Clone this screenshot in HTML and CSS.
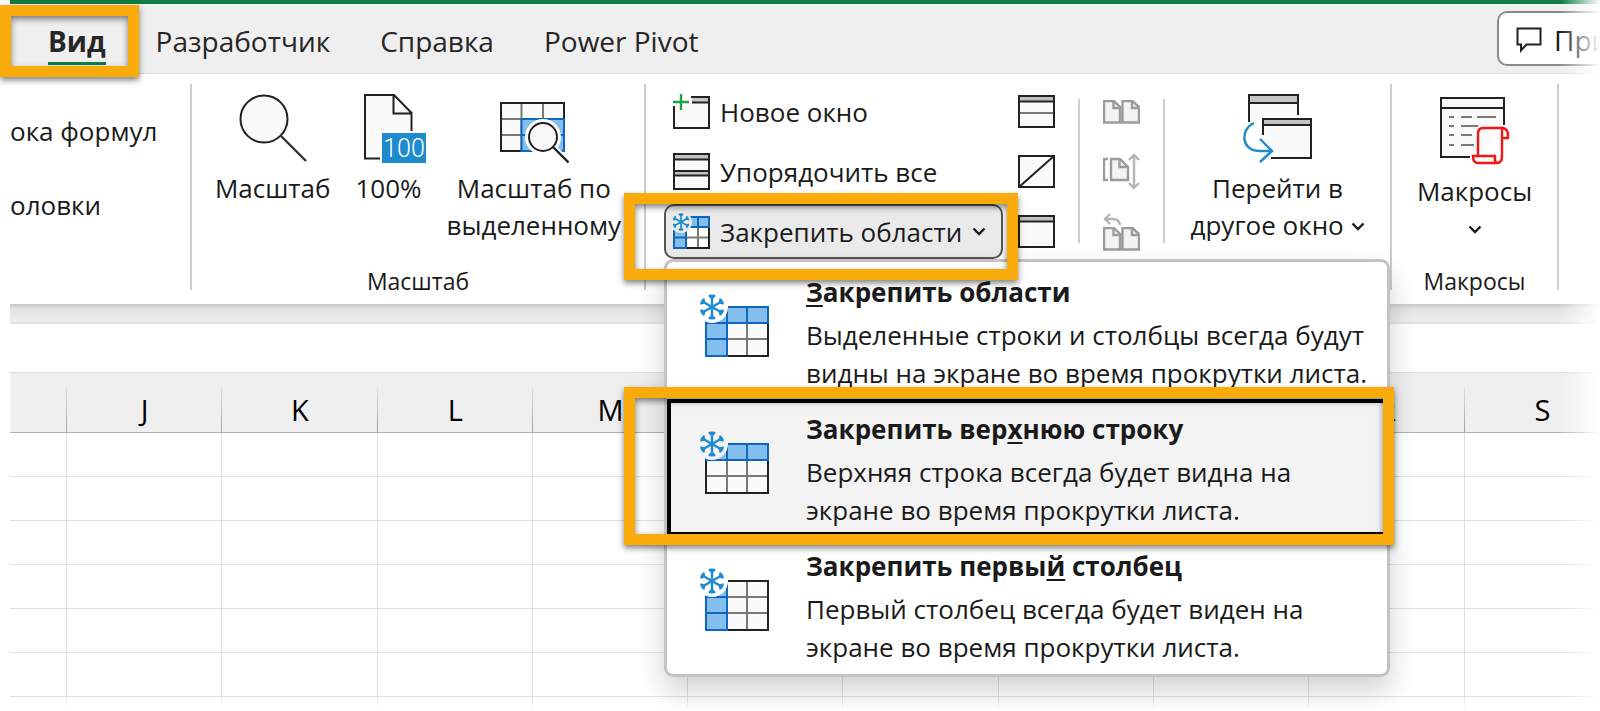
FILE: index.html
```html
<!DOCTYPE html>
<html lang="ru">
<head>
    <meta charset="UTF-8">
    <meta name="viewport" content="width=device-width, initial-scale=1.0">
    <title>Закрепить области</title>
    <link rel="stylesheet" href="styles.css">
</head>
<body>
    <!-- shared icon parts -->
    <svg class="defs" aria-hidden="true">
        <symbol id="flake" viewBox="-13 -13 26 26">
            <g fill="none" stroke="#1e8bcd" stroke-width="2.4">
                <g id="arm"><path d="M0 -12.5V12.5M-3 -11.8L0 -9L3 -11.8M-3 11.8L0 9L3 11.8"/></g>
                <use href="#arm" transform="rotate(60)"/>
                <use href="#arm" transform="rotate(120)"/>
            </g>
        </symbol>
        <symbol id="chevron" viewBox="0 0 14 9">
            <path d="M1.5 1.5L7 7L12.5 1.5" fill="none" stroke="#1a1a1a" stroke-width="2.4"/>
        </symbol>
        <symbol id="pages" viewBox="0 0 37 24">
            <path d="M1 1H11L17 7V22.500H1ZM19.500 1H29.500L36 7V22.500H19.500Z" fill="#f3f3f3" stroke="#9c9c9c" stroke-width="2.400"/>
            <path d="M10.500 1V8H17M29 1V8H36" fill="none" stroke="#9c9c9c" stroke-width="2.400"/>
        </symbol>
    </svg>

    <div class="page">
        <nav class="tabs">
            <a class="tab active" href="#view">Вид<span class="callout callout-tab"></span></a>
            <a class="tab" href="#developer">Разработчик</a>
            <a class="tab" href="#help">Справка</a>
            <a class="tab" href="#pivot">Power Pivot</a>
            <button class="comments">
                <svg width="26" height="26" viewBox="0 0 26 26"><path d="M1.500 1.500H24.500V17.500H10.500L5 23.500V17.500H1.500Z" fill="none" stroke="#222" stroke-width="2"/></svg>
                При
            </button>
        </nav>

        <div class="ribbon">
            <div class="group show">
                <span>ока формул</span>
                <span>оловки</span>
            </div>
            <span class="sep"></span>

            <div class="group zoom">
                <div class="row">
                    <button class="big">
                        <svg width="70" height="72" viewBox="0 0 70 72"><circle cx="26" cy="25" r="23.500" fill="#fafafa" stroke="#222" stroke-width="2"/><path d="M42.500 41.500L68 67" stroke="#333" stroke-width="2.400"/></svg>
                        <span>Масштаб</span>
                    </button>
                    <button class="big">
                        <svg class="percent" width="50" height="72" viewBox="0 0 50 72">
                            <path d="M1 1H30L47.500 19V64.500H1Z" fill="#fafafa"/>
                            <path d="M16.500 64.500H1V1H30L47.500 19V37M29.500 1V19.500H47.500" fill="none" stroke="#222" stroke-width="2"/>
                            <rect x="16" y="37" width="46" height="35" fill="#fff"/>
                            <rect x="18" y="39" width="44" height="30" fill="#1e8bcd"/>
                            <text class="icon-text" x="40" y="63" text-anchor="middle">100</text>
                        </svg>
                        <span>100%</span>
                    </button>
                    <button class="big">
                        <svg width="70" height="72" viewBox="0 0 70 72">
                            <rect x="2" y="9" width="63" height="48" fill="#fafafa"/>
                            <path d="M22.500 9V57M44 9V25M2 25H22M2 41H22" stroke="#7a7974" stroke-width="2" fill="none"/>
                            <rect x="2" y="9" width="63" height="48" fill="none" stroke="#222" stroke-width="2"/>
                            <rect x="22.500" y="25" width="42.500" height="32" fill="#83beec" stroke="#0f66bd" stroke-width="2"/>
                            <path d="M22 41H65M44 25V57" stroke="#0f66bd" stroke-width="2"/>
                            <circle cx="44" cy="43" r="18" fill="#fff"/>
                            <path d="M52 52L67 67" stroke="#fff" stroke-width="8"/>
                            <circle cx="44" cy="43" r="14" fill="#fafafa" stroke="#222" stroke-width="2"/>
                            <path d="M54 53L69.500 68.500" stroke="#222" stroke-width="2.400"/>
                        </svg>
                        <span>Масштаб по<br>выделенному</span>
                    </button>
                </div>
                <div class="caption">Масштаб</div>
            </div>
            <span class="sep"></span>

            <div class="group window">
                <div class="stack commands">
                    <button class="small">
                        <svg width="37" height="37" viewBox="0 0 37 37">
                            <path d="M1 13V35H36V4H18" fill="#fafafa"/>
                            <rect x="19" y="4" width="17" height="5" fill="#c8c9c1"/>
                            <path d="M1 13V35H36V4H18M19 9.500H36" fill="none" stroke="#222" stroke-width="2"/>
                            <path d="M8 1V17M0 9H16" stroke="#24a148" stroke-width="2.400"/>
                        </svg>
                        Новое окно
                    </button>
                    <button class="small">
                        <svg width="37" height="37" viewBox="0 0 37 37">
                            <rect x="1" y="1" width="35" height="35" fill="#fafafa"/>
                            <path d="M1 4H36M1 20H36" stroke="#c2c3bd" stroke-width="5"/>
                            <path d="M1 1H36V36H1ZM1 6.500H36M1 18H36M1 22.500H36" fill="none" stroke="#222" stroke-width="2"/>
                        </svg>
                        Упорядочить все
                    </button>
                    <div class="freeze">
                        <button class="small open" aria-expanded="true">
                            <svg width="37" height="37" viewBox="0 0 37 37">
                                <rect x="1" y="4" width="35" height="31" fill="#fff"/>
                                <path d="M13 24.500H36M25 14V35" stroke="#7a7974" stroke-width="2"/>
                                <path d="M36 14V35H13" fill="none" stroke="#222" stroke-width="2"/>
                                <path d="M1 4H36V14H13V35H1ZM13 4V14M25 4V14M1 14H13M1 24.500H13" fill="#83beec" stroke="#0f66bd" stroke-width="2"/>
                                <circle cx="8" cy="9" r="11" fill="#eaeaea"/>
                                <use href="#flake" x="-1" y="0" width="18" height="18"/>
                            </svg>
                            Закрепить области
                            <svg width="14" height="9"><use href="#chevron"/></svg>
                        </button>

                        <div class="menu" role="menu">
                            <button class="item" role="menuitem">
                                <svg width="70" height="64" viewBox="0 0 70 64">
                                    <rect x="6" y="13" width="62" height="49" fill="#fafafa"/>
                                    <path d="M27 45H68M47 29V62" stroke="#7a7974" stroke-width="2"/>
                                    <path d="M68 29V62H27" fill="none" stroke="#222" stroke-width="2"/>
                                    <path d="M6 13H68V29H27V62H6ZM27 13V29M47 13V29M6 29H27M6 45H27" fill="#83beec" stroke="#0f66bd" stroke-width="2"/>
                                    <circle cx="12" cy="13" r="16" fill="#fff"/>
                                    <use href="#flake" x="-1" y="0" width="26" height="26"/>
                                </svg>
                                <span class="item-text">
                                    <b><u>З</u>акрепить области</b>
                                    <span>Выделенные строки и столбцы всегда будут<br>видны на экране во время прокрутки листа.</span>
                                </span>
                            </button>
                            <button class="item selected" role="menuitem">
                                <svg width="70" height="64" viewBox="0 0 70 64">
                                    <rect x="6" y="13" width="62" height="49" fill="#fafafa"/>
                                    <path d="M6 45H68M27 29V62M47 29V62" stroke="#7a7974" stroke-width="2"/>
                                    <path d="M6 29V62H68V29" fill="none" stroke="#222" stroke-width="2"/>
                                    <path d="M6 13H68V29H6ZM27 13V29M47 13V29" fill="#83beec" stroke="#0f66bd" stroke-width="2"/>
                                    <circle cx="12" cy="13" r="16" fill="#f3f3f3"/>
                                    <use href="#flake" x="-1" y="0" width="26" height="26"/>
                                </svg>
                                <span class="item-text">
                                    <b>Закрепить вер<u>х</u>нюю строку</b>
                                    <span>Верхняя строка всегда будет видна на<br>экране во время прокрутки листа.</span>
                                </span>
                                <span class="callout callout-item"></span>
                            </button>
                            <button class="item" role="menuitem">
                                <svg width="70" height="64" viewBox="0 0 70 64">
                                    <rect x="6" y="13" width="62" height="49" fill="#fafafa"/>
                                    <path d="M27 29H68M27 45H68M47 13V62" stroke="#7a7974" stroke-width="2"/>
                                    <path d="M27 13H68V62H27" fill="none" stroke="#222" stroke-width="2"/>
                                    <path d="M6 13H27V62H6ZM6 29H27M6 45H27" fill="#83beec" stroke="#0f66bd" stroke-width="2"/>
                                    <circle cx="12" cy="13" r="16" fill="#fff"/>
                                    <use href="#flake" x="-1" y="0" width="26" height="26"/>
                                </svg>
                                <span class="item-text">
                                    <b>Закрепить первы<u>й</u> столбец</b>
                                    <span>Первый столбец всегда будет виден на<br>экране во время прокрутки листа.</span>
                                </span>
                            </button>
                        </div>
                        <span class="callout callout-freeze"></span>
                    </div>
                </div>

                <div class="stack">
                    <button class="icon" aria-label="Разделить">
                        <svg width="37" height="33" viewBox="0 0 37 33"><path d="M1 1H36V32H1Z" fill="#fafafa"/><path d="M1 4H36" stroke="#bfc2bc" stroke-width="5"/><path d="M1 18H36" stroke="#7a7974" stroke-width="2"/><path d="M1 1H36V32H1ZM1 6.500H36" fill="none" stroke="#222" stroke-width="2"/></svg>
                    </button>
                    <button class="icon" aria-label="Скрыть">
                        <svg width="37" height="33" viewBox="0 0 37 33"><path d="M1 1H36V32H1ZM1 32L36 1" fill="#fafafa" stroke="#222" stroke-width="2"/></svg>
                    </button>
                    <button class="icon" aria-label="Отобразить">
                        <svg width="37" height="33" viewBox="0 0 37 33"><path d="M1 1H36V32H1Z" fill="#fafafa"/><path d="M1 4H36" stroke="#c2c3bd" stroke-width="5"/><path d="M1 1H36V32H1ZM1 6.500H36" fill="none" stroke="#222" stroke-width="2"/></svg>
                    </button>
                </div>
                <span class="sep short"></span>
                <div class="stack">
                    <button class="icon" aria-label="Рядом" disabled>
                        <svg width="37" height="24"><use href="#pages"/></svg>
                    </button>
                    <button class="icon" aria-label="Синхронная прокрутка" disabled>
                        <svg width="37" height="37" viewBox="0 0 37 37">
                            <path d="M8 6H17L25 14V27H8Z" fill="#f3f3f3"/>
                            <path d="M5 6H1V27H5M8 6H17L25 14V27H8ZM16.500 6V14H25" fill="none" stroke="#9c9c9c" stroke-width="2.400"/>
                            <path d="M31 2V35M26 7L31 2L36 7M26 30L31 35L36 30" fill="none" stroke="#b4b4b4" stroke-width="2.400"/>
                        </svg>
                    </button>
                    <button class="icon" aria-label="Восстановить расположение окна" disabled>
                        <svg width="37" height="38" viewBox="0 0 37 38">
                            <path d="M7 1L2 6L7 11M2 6H10Q16 6 17 12" fill="none" stroke="#b4b4b4" stroke-width="2.400"/>
                            <use href="#pages" x="0" y="14" width="37" height="24"/>
                        </svg>
                    </button>
                </div>
                <span class="sep short"></span>
                <button class="big switch">
                    <svg width="70" height="72" viewBox="0 0 70 72">
                        <path d="M6 1H55V64H6Z" fill="#fafafa"/>
                        <rect x="6" y="1" width="49" height="8" fill="#c4c4c4"/>
                        <path d="M6 28V1H55V21M6 9H55" fill="none" stroke="#222" stroke-width="2"/>
                        <path d="M17 21H72V72H0V30H17Z" fill="#fff"/>
                        <rect x="20" y="25" width="48" height="39" fill="#fafafa"/>
                        <rect x="20" y="25" width="48" height="6" fill="#c4c4c4"/>
                        <path d="M20 41V25H68V64H28M20 31H68" fill="none" stroke="#222" stroke-width="2"/>
                        <path d="M11 29C-3 35 -2 57 16 57H29M17 45L29 57L17 68" fill="none" stroke="#1e8bcd" stroke-width="2.400"/>
                    </svg>
                    <span>Перейти в<br>другое окно <svg width="14" height="9"><use href="#chevron"/></svg></span>
                </button>
            </div>
            <span class="sep"></span>

            <div class="group macros">
                <button class="big">
                    <svg width="70" height="72" viewBox="0 0 70 72">
                        <path d="M1 4H64V63H1Z" fill="#fafafa"/>
                        <path d="M30 63H1V4H64V31M1 14H64" fill="none" stroke="#222" stroke-width="2"/>
                        <path d="M9 23H14M21 23H32M37 23H56M9 32H14M21 32H38M9 41H14M21 41H32M9 51H14M21 51H35" stroke="#7a7974" stroke-width="2"/>
                        <path d="M34 33H70V72H30V58H34Z" fill="#fff"/>
                        <path d="M38 62V40Q38 34 43 34H63Q68 35 68 41V44H62V34M62 44V62Q62 69 57 69H38Q33 69 33 62H55V66Q55 69 58 69" fill="#fafafa" stroke="#f51414" stroke-width="2.400"/>
                    </svg>
                    <span>Макросы<br><svg width="14" height="9"><use href="#chevron"/></svg></span>
                </button>
                <div class="caption">Макросы</div>
            </div>
            <span class="sep"></span>
            <div class="rest"></div>
        </div>

        <div class="ribbon-shadow"></div>
        <div class="formula-bar"></div>

        <table class="sheet">
            <colgroup>
                <col class="col-first">
                <col span="10">
            </colgroup>
            <thead>
                <tr><th></th><th>J</th><th>K</th><th>L</th><th>M</th><th></th><th></th><th></th><th></th><th>R</th><th>S</th></tr>
            </thead>
            <tbody>
                <tr><td></td><td></td><td></td><td></td><td></td><td></td><td></td><td></td><td></td><td></td><td></td></tr>
                <tr><td></td><td></td><td></td><td></td><td></td><td></td><td></td><td></td><td></td><td></td><td></td></tr>
                <tr><td></td><td></td><td></td><td></td><td></td><td></td><td></td><td></td><td></td><td></td><td></td></tr>
                <tr><td></td><td></td><td></td><td></td><td></td><td></td><td></td><td></td><td></td><td></td><td></td></tr>
                <tr><td></td><td></td><td></td><td></td><td></td><td></td><td></td><td></td><td></td><td></td><td></td></tr>
                <tr><td></td><td></td><td></td><td></td><td></td><td></td><td></td><td></td><td></td><td></td><td></td></tr>
                <tr class="tail"><td></td><td></td><td></td><td></td><td></td><td></td><td></td><td></td><td></td><td></td><td></td></tr>
            </tbody>
        </table>
    </div>
</body>
</html>
```
FILE: styles.css
```css
* {
    box-sizing: border-box;
}

body {
    margin: 0;
    background: #fff;
    color: #1a1a1a;
    font-family: 'Segoe UI', 'Open Sans', 'Noto Sans', sans-serif;
    font-size: 26px;
}

button {
    font: inherit;
    color: inherit;
    background: none;
    border: 0;
    padding: 0;
    white-space: nowrap;
}

svg {
    flex: none;
}

.defs {
    position: absolute;
    width: 0;
    height: 0;
}

.page {
    position: relative;
    padding-left: 10px;
    overflow: hidden;
}

/* fade out on the right side */
.page::after {
    content: '';
    position: absolute;
    top: 0;
    right: 0;
    bottom: 0;
    width: 40px;
    background: linear-gradient(to right, rgba(255, 255, 255, 0), #fff);
    pointer-events: none;
}

/* Tabs */
.tabs {
    display: flex;
    align-items: center;
    gap: 50px;
    height: 74px;
    padding-left: 38px;
    background: #efefef;
    border-top: 4px solid #107c41;
    border-bottom: 1px solid #dcdcdc;
    font-size: 28px;
}

.tab {
    position: relative;
    margin-top: 8px;
    line-height: 42px;
    color: #262626;
    text-decoration: none;
    white-space: nowrap;
    border-bottom: 3px solid transparent;
}

.tab.active {
    font-weight: bold;
    border-color: #107c41;
}

.comments {
    display: flex;
    align-items: center;
    gap: 12px;
    width: 103px;
    height: 55px;
    margin-left: auto;
    padding: 3px 0 0 17px;
    background: #fff;
    border: 2px solid #8a8a8a;
    border-right: 0;
    border-radius: 10px 0 0 10px;
}

/* Ribbon */
.ribbon {
    display: flex;
    height: 230px;
    padding-top: 10px;
}

.sep {
    flex: none;
    width: 2px;
    height: 206px;
    background: #cdcdcd;
}

.sep.short {
    height: 144px;
    margin-top: 15px;
}

.group {
    display: flex;
    flex-direction: column;
    min-width: 0;
}

.show {
    flex: 180 1 0;
    gap: 37px;
    padding-top: 29px;
    line-height: 37px;
    white-space: nowrap;
}

.zoom {
    flex: 452 1 0;
}

.row {
    display: flex;
    justify-content: center;
    gap: 25px;
}

.macros {
    flex: 165 1 0;
    align-items: center;
}

.rest {
    flex: 41 1 0;
}

.caption {
    margin-top: auto;
    padding-bottom: 7px;
    font-size: 23px;
    line-height: 32px;
    text-align: center;
}

.big {
    display: flex;
    flex-direction: column;
    align-items: center;
    gap: 4px;
    padding-top: 10px;
    line-height: 37px;
}

.macros .big {
    gap: 7px;
}

.big span svg {
    vertical-align: 4px;
}

.percent {
    overflow: visible;
}

.icon-text {
    fill: #fff;
    font-family: Roboto, sans-serif;
    font-size: 25px;
    font-weight: 300;
}

.group.window {
    flex: 744 1 0;
    flex-direction: row;
    gap: 23px;
}

.stack {
    display: flex;
    flex-direction: column;
    gap: 5px;
}

.commands {
    margin: 0 -8px 0 18px;
}

.icon {
    display: flex;
    align-items: center;
    height: 55px;
}

.small {
    display: flex;
    align-items: center;
    gap: 10px;
    width: 339px;
    height: 55px;
    padding-left: 7px;
    border: 2px solid transparent;
    border-radius: 10px;
}

.small.open {
    background: #eaeaea;
    border-color: #555;
}

.switch {
    flex: 1;
    margin-left: -23px;
}

/* Freeze panes menu */
.freeze {
    position: relative;
    z-index: 1;
}

.menu {
    position: absolute;
    top: 55px;
    left: 0;
    width: 726px;
    padding-bottom: 1px;
    background: #fff;
    border: 3px solid #c3c3c3;
    border-radius: 9px;
    box-shadow: 0 14px 28px rgba(0, 0, 0, 0.18);
}

.item {
    position: relative;
    display: flex;
    gap: 36px;
    width: 100%;
    height: 137px;
    padding: 32px 0 0 33px;
    text-align: left;
}

.item-text {
    margin-top: -25px;
    line-height: 38px;
}

.item-text b {
    display: block;
    line-height: 47px;
}

.item u {
    text-decoration-thickness: 2px;
    text-underline-offset: 3px;
}

.item.selected {
    background: #f3f3f3;
    box-shadow: inset 0 0 0 4px #000;
}

/* Orange frames */
.callout {
    position: absolute;
    border: 11px solid #f8ab0a;
    box-shadow: 0 3px 6px rgba(0, 0, 0, 0.5), inset 0 3px 6px rgba(0, 0, 0, 0.5);
    pointer-events: none;
}

.callout-tab {
    top: -15px;
    right: -33px;
    bottom: -15px;
    left: -48px;
}

.callout-freeze {
    top: -11px;
    right: -15px;
    bottom: -21px;
    left: -40px;
}

.callout-item {
    top: -12px;
    right: -7px;
    bottom: -9px;
    left: -43px;
    z-index: 1;
}

/* Sheet */
.ribbon-shadow {
    height: 20px;
    background: linear-gradient(#c8c8c8, #e2e2e2 25%, #efefef);
    border-bottom: 2px solid #e2e2e2;
}

.formula-bar {
    height: 48px;
}

/* the last column runs past the window edge */
.sheet {
    width: calc(100% + 20px);
    table-layout: fixed;
    border-collapse: separate;
    border-spacing: 0;
}

.col-first {
    width: 57px;
}

.sheet th {
    height: 61px;
    padding: 15px 0 0;
    background: linear-gradient(#e0e0e0, #a0a0a0) right bottom / 1px 44px no-repeat #efefef;
    border-top: 1px solid #dcdcdc;
    border-bottom: 1px solid #b0b0b0;
    font-size: 29px;
    font-weight: normal;
    line-height: 40px;
    color: #000;
}

.sheet td {
    height: 44px;
    padding: 0;
    border-right: 1px solid #e0e0e0;
    border-bottom: 1px solid #e0e0e0;
}

.sheet .tail td {
    height: 12px;
    background: linear-gradient(#e0e0e0, #fff) right top / 1px 100% no-repeat;
    border: 0;
}
```
